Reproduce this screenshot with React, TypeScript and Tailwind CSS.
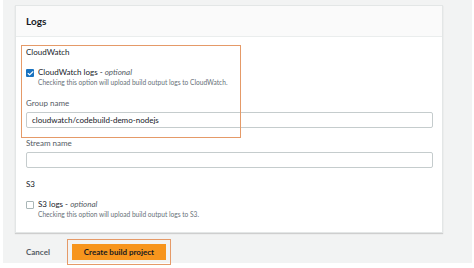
import { Check } from 'lucide-react';

function Field({ label, value }: { label: string; value?: string }) {
  return (
    <div className="flex flex-col">
      <p className="text-[8px] leading-[12px] text-[#545b64]">{label}</p>
      <div className="mt-[3px] h-[16px] w-[407px] rounded-[2px] border border-[#c5cccd] bg-white px-[5px] flex items-center text-[8px] text-[#16191f]">
        {value}
      </div>
    </div>
  );
}

function CheckRow({ checked, title, help }: { checked: boolean; title: string; help: string }) {
  return (
    <div className="flex items-start gap-[4px]">
      {checked ? (
        <span className="mt-[2px] w-[8px] h-[8px] rounded-[1px] bg-[#1a73c0] flex items-center justify-center">
          <Check className="w-[7px] h-[7px] text-white" strokeWidth={4} />
        </span>
      ) : (
        <span className="mt-[2px] w-[8px] h-[8px] rounded-[1px] border border-[#aab7b8] bg-white" />
      )}
      <div className="leading-none">
        <p className="text-[8px] leading-[11px] text-[#16191f]">
          {title} - <i className="text-[#545b64]">optional</i>
        </p>
        <p className="text-[6.6px] leading-[9px] text-[#687078]">{help}</p>
      </div>
    </div>
  );
}

export default function App() {
  return (
    <div className="w-[474px] h-[268px] bg-white font-['Lato',sans-serif]">
      <div className="relative ml-[3px] w-[469px] h-[263px] bg-[#f2f3f3] pl-[12px] pt-[5px]">
        {/* logs card */}
        <div className="w-[428px] bg-white border border-[#e3e6e6] shadow-[0_1px_1px_rgba(0,0,0,0.15)]">
          <div className="h-[31px] bg-[#fafafa] border-b border-[#eaeded] px-[10px] flex items-center">
            <h2 className="text-[10px] font-bold text-[#16191f]">Logs</h2>
          </div>
          <div className="px-[10px] pt-[9px] pb-[13px] flex flex-col">
            <p className="text-[8px] leading-[12px] text-[#16191f]">CloudWatch</p>
            <div className="mt-[9px]">
              <CheckRow
                checked
                title="CloudWatch logs"
                help="Checking this option will upload build output logs to CloudWatch."
              />
            </div>
            <div className="mt-[10px]">
              <Field label="Group name" value="cloudwatch/codebuild-demo-nodejs" />
            </div>
            <div className="mt-[9px]">
              <Field label="Stream name" />
            </div>
            <p className="mt-[10px] text-[8px] leading-[12px] text-[#16191f]">S3</p>
            <div className="mt-[9px]">
              <CheckRow
                checked={false}
                title="S3 logs"
                help="Checking this option will upload build output logs to S3."
              />
            </div>
          </div>
        </div>

        {/* footer */}
        <div className="flex items-center mt-[6px] pl-[11px]">
          <button className="text-[8px] font-bold text-[#545b64]">Cancel</button>
          <div className="ml-[17px] border border-[#e59a68] py-[4px] px-[4px]">
            <button className="w-[94px] h-[16px] bg-[#f7951d] text-[8px] font-bold text-[#16191f] flex items-center justify-center">
              Create build project
            </button>
          </div>
        </div>

        {/* highlight box over cloudwatch section */}
        <div className="absolute left-[18px] top-[45px] w-[220px] h-[93px] border border-[#e59a68] pointer-events-none" />
      </div>
    </div>
  );
}
